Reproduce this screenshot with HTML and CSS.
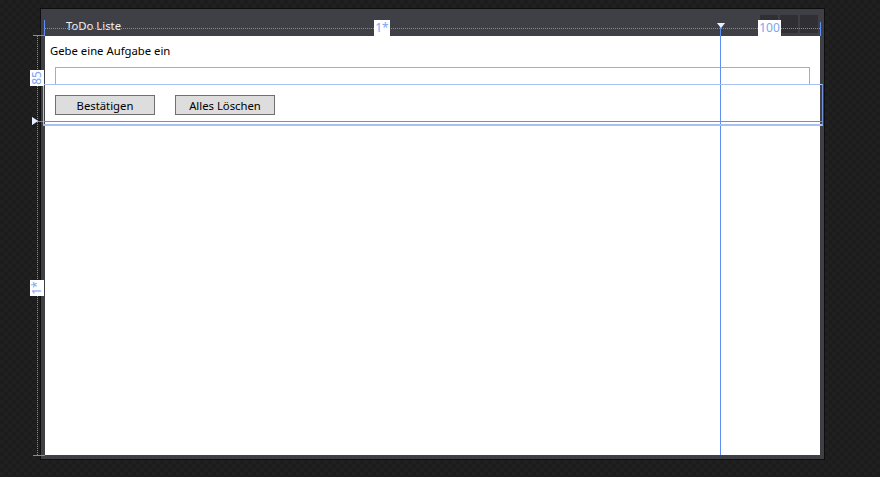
FILE: index.html
```html
<!DOCTYPE html>
<html>

<head>
    <meta charset="utf-8">
    <title>ToDo Liste</title>
    <link rel="stylesheet" href="styles.css">
</head>

<body>
    <div class="stage">
        <div class="window">
            <div class="title-bar">
                <span class="title">ToDo Liste</span>
                <div class="title-buttons">
                    <span class="title-btn"></span>
                    <span class="title-btn"></span>
                    <span class="title-btn"></span>
                </div>
            </div>
            <div class="client">
                <label class="prompt" for="task">Gebe eine Aufgabe ein</label>
                <input class="task-input" type="text" id="task">
                <div class="buttons">
                    <button class="btn">Bestätigen</button>
                    <button class="btn">Alles Löschen</button>
                </div>
            </div>
        </div>

        <!-- Designer-Hilfslinien über dem Fenster -->
        <div class="guide col-ruler"></div>
        <div class="guide tick tick-tl-v"></div>
        <div class="guide tick tick-tl-h"></div>
        <div class="guide tick tick-tr-v"></div>
        <div class="guide tick tick-bl-h"></div>
        <div class="guide row-ruler"></div>
        <div class="guide col-line"></div>
        <div class="guide row-line"></div>
        <div class="guide selection"></div>
        <div class="guide marker marker-down"></div>
        <div class="guide marker marker-right"></div>
        <div class="guide size-label top-star">1*</div>
        <div class="guide size-label top-fixed">100</div>
        <div class="guide size-label side-label side-85"><span>85</span></div>
        <div class="guide size-label side-label side-star"><span>1*</span></div>
    </div>
</body>

</html>
```

FILE: styles.css
```css
body {
    margin: 0;
    background-color: #1e1e1e;
    background-image: repeating-conic-gradient(#1c1c1c 0% 25%, #202020 0% 50%);
    background-size: 8px 8px;
    font-family: "Noto Sans", "Open Sans", sans-serif;
    font-size: 11.3px;
    height: 477px;
    overflow: hidden;
}

.stage {
    position: relative;
    padding: 8px 0 0 40px;
}

.window {
    border: 1px solid #0e0e0e;
    background-color: #3f3f46;
    display: flex;
    flex-direction: column;
    padding: 0 4px 4px 4px;
    width: 775px;
    height: 446px;
}

.title-bar {
    height: 27px;
    display: flex;
    align-items: flex-start;
    padding: 0 2px 0 21px;
}

.title {
    color: #f1f1f1;
    line-height: 14px;
    padding-top: 10px;
}

.title-buttons {
    margin-left: auto;
    display: flex;
    gap: 2px;
    padding-top: 6px;
}

.title-btn {
    width: 18px;
    height: 18px;
    background-color: #2f2f34;
}

.client {
    flex: 1;
    background-color: #fff;
    padding: 7px 10px 0 5px;
}

.prompt {
    display: block;
    color: #000;
    line-height: 16px;
    margin-bottom: 8px;
}

.task-input {
    display: block;
    box-sizing: border-box;
    width: 755px;
    height: 18px;
    margin-left: 5px;
    border: 1px solid #abadb3;
    padding: 0 2px;
    outline: none;
}

.buttons {
    display: flex;
    gap: 20px;
    margin: 10px 0 0 5px;
}

.btn {
    width: 100px;
    height: 20px;
    padding: 0;
    background-color: #dddddd;
    border: 1px solid #707070;
    font-family: inherit;
    font-size: 11.3px;
    color: #000;
}

.guide {
    position: absolute;
}

.col-ruler {
    left: 45px;
    top: 28px;
    width: 775px;
    height: 1px;
    background-image: repeating-linear-gradient(90deg, #5f8ff0 0 1px, transparent 1px 2px);
}

.row-ruler {
    left: 37px;
    top: 36px;
    width: 1px;
    height: 419px;
    background-image: repeating-linear-gradient(180deg, #5f8ff0 0 1px, transparent 1px 2px);
}

.tick {
    background-color: #5f8ff0;
}

.tick-tl-v {
    left: 44px;
    top: 20px;
    width: 1px;
    height: 16px;
}

.tick-tl-h {
    left: 33px;
    top: 35px;
    width: 12px;
    height: 1px;
}

.tick-tr-v {
    left: 820px;
    top: 22px;
    width: 1px;
    height: 14px;
}

.tick-bl-h {
    left: 33px;
    top: 455px;
    width: 12px;
    height: 1px;
}

.col-line {
    left: 720px;
    top: 27px;
    width: 1px;
    height: 428px;
    background-color: #5f8ff0;
}

.row-line {
    left: 33px;
    top: 121px;
    width: 789px;
    height: 1px;
    background-color: #5f8ff0;
}

.selection {
    left: 43px;
    top: 84px;
    width: 778px;
    height: 39px;
    border: 1px solid #a9c1f2;
    border-bottom-width: 2px;
    border-right-color: #6f90d8;
}

.marker {
    width: 0;
    height: 0;
}

.marker-down {
    left: 717px;
    top: 23px;
    border-left: 4px solid transparent;
    border-right: 4px solid transparent;
    border-top: 5px solid #e8efff;
    filter: drop-shadow(0 0 0.5px #5f8ff0);
}

.marker-right {
    left: 32px;
    top: 117px;
    border-top: 4px solid transparent;
    border-bottom: 4px solid transparent;
    border-left: 6px solid #e8efff;
    filter: drop-shadow(0 0 0.5px #5f8ff0);
}

.size-label {
    background-color: #fff;
    color: #7ea4f2;
    font-family: "Noto Sans", sans-serif;
    font-size: 12px;
    line-height: 16px;
    height: 16px;
    text-align: center;
}

.top-star {
    left: 374px;
    top: 20px;
    width: 16px;
}

.top-fixed {
    left: 758px;
    top: 20px;
    width: 23px;
}

.side-label {
    left: 30px;
    width: 14px;
    display: flex;
    align-items: center;
    justify-content: center;
}

.side-label span {
    transform: rotate(-90deg);
    display: block;
}

.side-85 {
    top: 70px;
    height: 16px;
}

.side-star {
    top: 280px;
    height: 16px;
}
```
